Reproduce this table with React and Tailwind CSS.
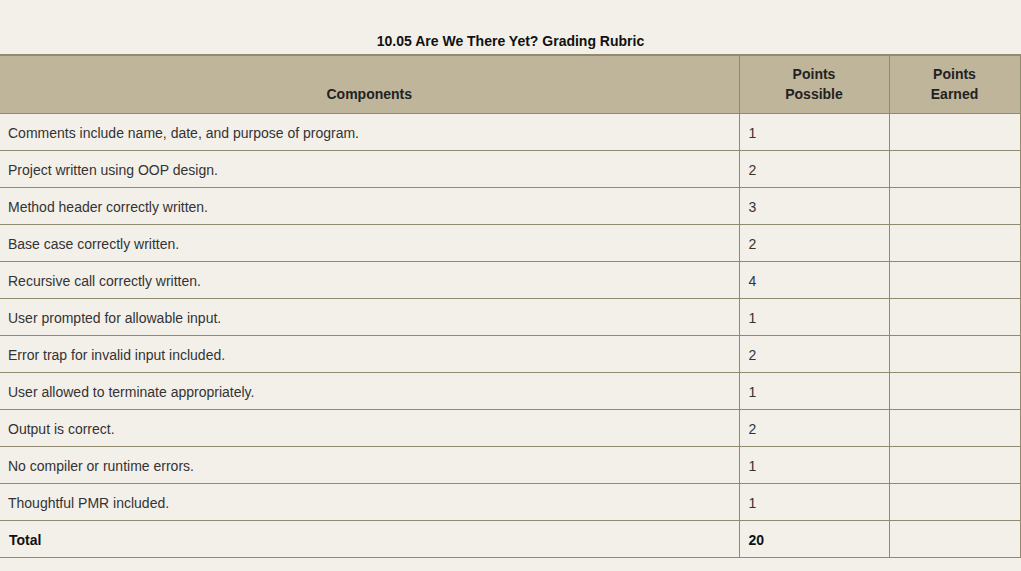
import React from 'react';

const rows = [
  ['Comments include name, date, and purpose of program.', 1],
  ['Project written using OOP design.', 2],
  ['Method header correctly written.', 3],
  ['Base case correctly written.', 2],
  ['Recursive call correctly written.', 4],
  ['User prompted for allowable input.', 1],
  ['Error trap for invalid input included.', 2],
  ['User allowed to terminate appropriately.', 1],
  ['Output is correct.', 2],
  ['No compiler or runtime errors.', 1],
  ['Thoughtful PMR included.', 1],
];

const App = () => {
  return (
    <div className="min-h-[571px] bg-[#f3f0ea] pt-[32px] font-['Liberation_Sans',Arial,sans-serif] text-[#333]">
      <h1 className="text-center text-[14px] font-bold leading-[18px] text-[#111] mb-[4px]">
        10.05 Are We There Yet? Grading Rubric
      </h1>
      <table className="w-[1020px] border-collapse table-fixed text-[14px]">
        <colgroup>
          <col className="w-[739px]" />
          <col className="w-[150px]" />
          <col className="w-[131px]" />
        </colgroup>
        <thead>
          <tr className="bg-[#bfb59a] border-t-2 border-b border-[#8f8a70] h-[58px]">
            <th className="align-bottom pb-[9px] font-bold text-[#222] leading-[20px]">Components</th>
            <th className="border-l border-[#8f8a70] align-middle font-bold text-[#222] leading-[20px]">
              Points<br />Possible
            </th>
            <th className="border-l border-r border-[#8f8a70] align-middle font-bold text-[#222] leading-[20px]">
              Points<br />Earned
            </th>
          </tr>
        </thead>
        <tbody>
          {rows.map(([label, pts]) => (
            <tr key={label} className="border-b border-[#8f8a70] h-[37px]">
              <td className="px-[8px] pt-[4px] align-middle">{label}</td>
              <td className="px-[9px] pt-[4px] border-l border-[#8f8a70] align-middle">{pts}</td>
              <td className="border-l border-r border-[#8f8a70]"></td>
            </tr>
          ))}
          <tr className="border-b border-[#8f8a70] h-[37px] font-bold text-[#111]">
            <td className="px-[9px] pt-[4px] align-middle">Total</td>
            <td className="px-[9px] pt-[4px] border-l border-[#8f8a70] align-middle">20</td>
            <td className="border-l border-r border-[#8f8a70]"></td>
          </tr>
        </tbody>
      </table>
    </div>
  );
};

export default App;
